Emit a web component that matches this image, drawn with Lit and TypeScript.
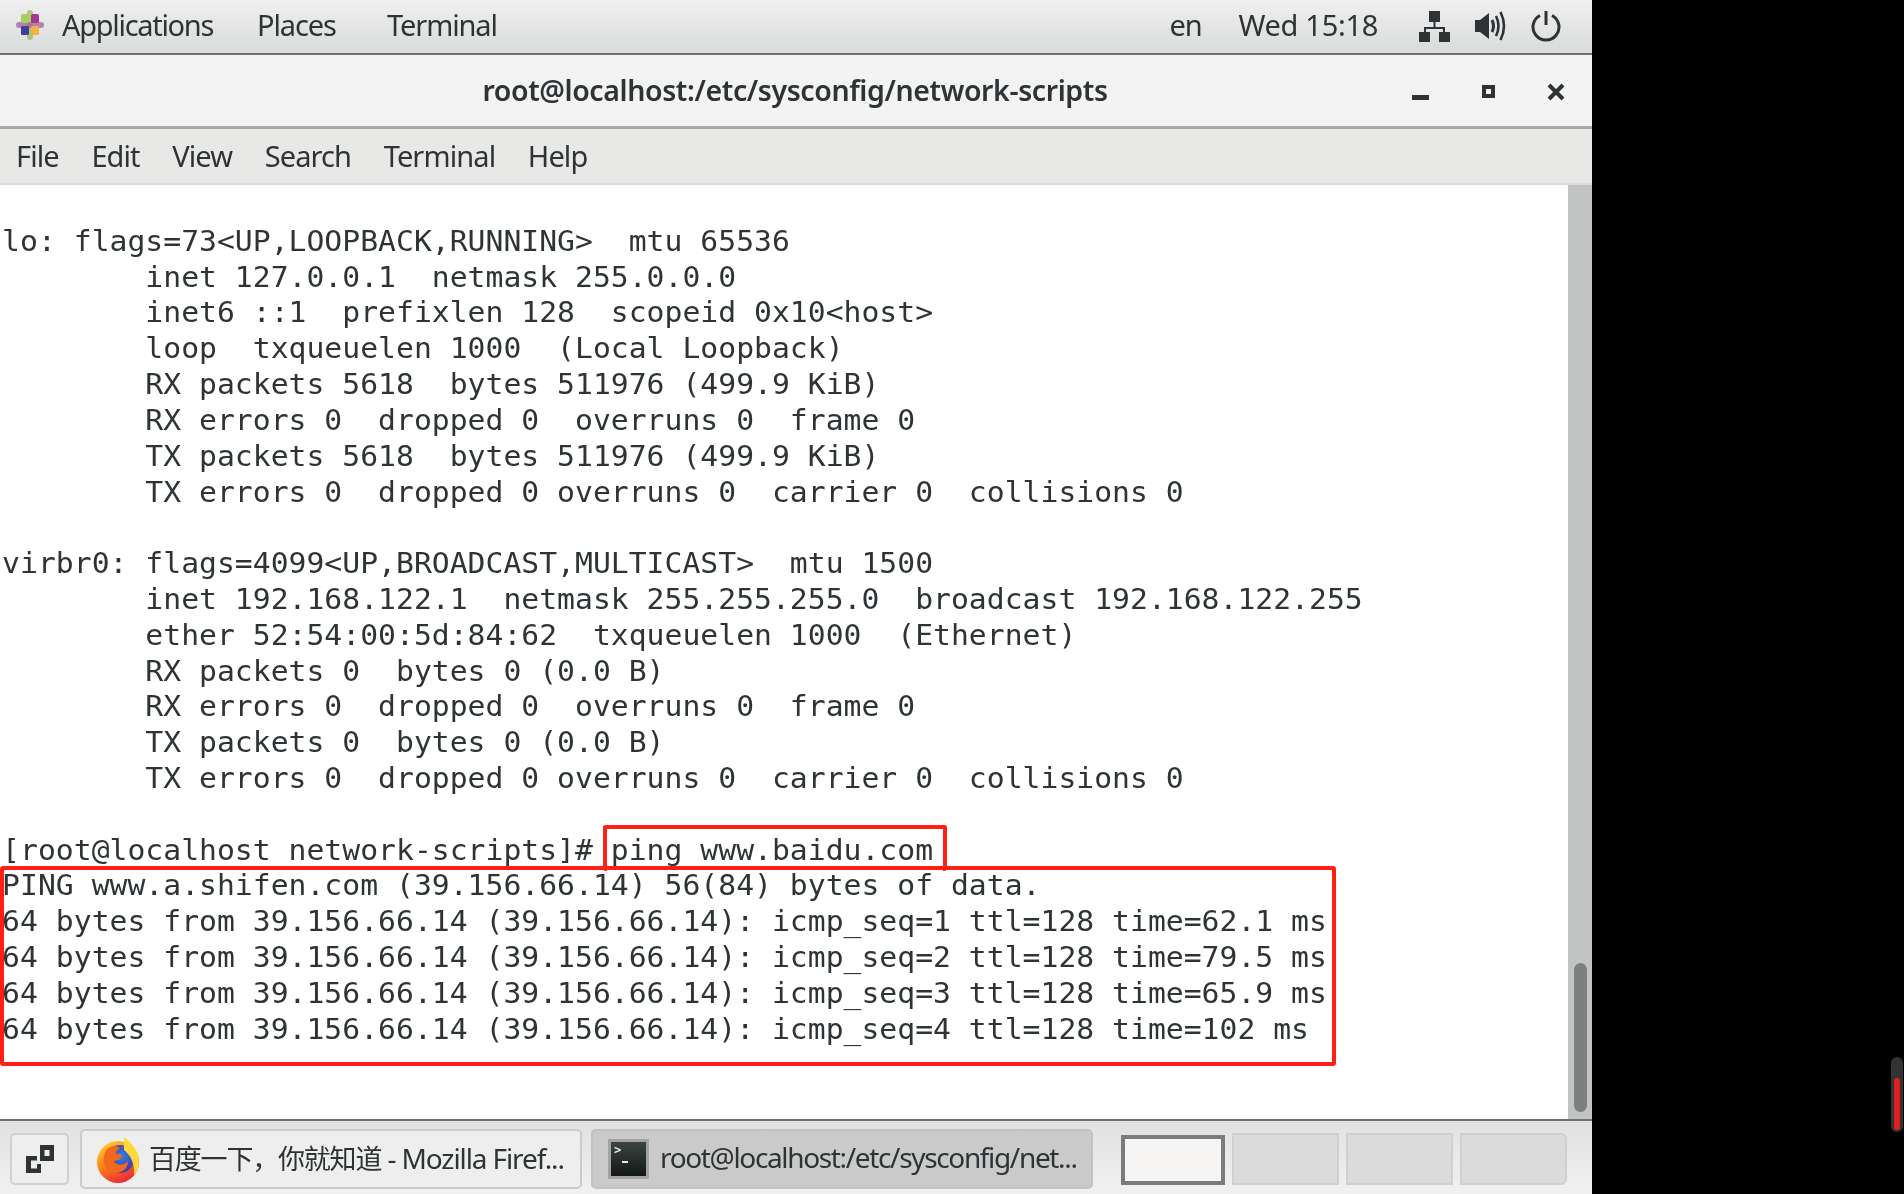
import { LitElement, html, css, svg } from "lit";
import { customElement } from "lit/decorators.js";

const TERM = `
lo: flags=73<UP,LOOPBACK,RUNNING>  mtu 65536
        inet 127.0.0.1  netmask 255.0.0.0
        inet6 ::1  prefixlen 128  scopeid 0x10<host>
        loop  txqueuelen 1000  (Local Loopback)
        RX packets 5618  bytes 511976 (499.9 KiB)
        RX errors 0  dropped 0  overruns 0  frame 0
        TX packets 5618  bytes 511976 (499.9 KiB)
        TX errors 0  dropped 0 overruns 0  carrier 0  collisions 0

virbr0: flags=4099<UP,BROADCAST,MULTICAST>  mtu 1500
        inet 192.168.122.1  netmask 255.255.255.0  broadcast 192.168.122.255
        ether 52:54:00:5d:84:62  txqueuelen 1000  (Ethernet)
        RX packets 0  bytes 0 (0.0 B)
        RX errors 0  dropped 0  overruns 0  frame 0
        TX packets 0  bytes 0 (0.0 B)
        TX errors 0  dropped 0 overruns 0  carrier 0  collisions 0

[root@localhost network-scripts]# ping www.baidu.com
PING www.a.shifen.com (39.156.66.14) 56(84) bytes of data.
64 bytes from 39.156.66.14 (39.156.66.14): icmp_seq=1 ttl=128 time=62.1 ms
64 bytes from 39.156.66.14 (39.156.66.14): icmp_seq=2 ttl=128 time=79.5 ms
64 bytes from 39.156.66.14 (39.156.66.14): icmp_seq=3 ttl=128 time=65.9 ms
64 bytes from 39.156.66.14 (39.156.66.14): icmp_seq=4 ttl=128 time=102 ms`;

const appsIcon = svg`<svg class="apps" viewBox="0 0 28 32" width="28" height="32">
  <rect x="11" y="1" width="6" height="30" rx="3" fill="#9ab84a" opacity=".7"/>
  <rect x="0" y="13" width="28" height="6" rx="3" fill="#a05a9a" opacity=".7"/>
  <rect x="5" y="5" width="8" height="9" rx="1.5" fill="#a3cf5a"/>
  <rect x="15" y="5" width="8" height="9" rx="1.5" fill="#a8378f"/>
  <rect x="5" y="17" width="8" height="9" rx="1.5" fill="#3f3f9f"/>
  <rect x="15" y="17" width="8" height="9" rx="1.5" fill="#f5b043"/>
</svg>`;

const netIcon = svg`<svg viewBox="0 0 31 32" width="31" height="32" fill="#2e3436">
  <rect x="10" y="1" width="11" height="11"/>
  <path d="M14.5 12h2v5H26v6h-2v-4H7v4H5v-6h9.5z"/>
  <rect x="0" y="22" width="11" height="10"/>
  <rect x="20" y="22" width="11" height="10"/>
</svg>`;

const volIcon = svg`<svg viewBox="0 0 31 32" width="31" height="32" fill="none" stroke="#2e3436">
  <path d="M0 10h5l9-7v26l-9-7H0z" fill="#2e3436" stroke="none"/>
  <path d="M17 10q3 6 0 12" stroke-width="3"/>
  <path d="M21 6q5 10 0 20" stroke-width="2.6"/>
  <path d="M25.5 2q7 14 0 28" stroke-width="2.6"/>
</svg>`;

const powerIcon = svg`<svg viewBox="0 0 30 32" width="30" height="32" fill="none" stroke="#2e3436" stroke-width="3">
  <path d="M15 1v14"/>
  <path d="M9 5.5a13 13 0 1 0 12 0"/>
</svg>`;

const winSwitch = svg`<svg viewBox="0 0 28 28" width="28" height="28" fill="#2e3436">
  <path fill-rule="evenodd" d="M14 0h14v16H14zM18.5 5v6h5V5z"/>
  <path d="M0 11h11v4.500H5v8h6V19h4v9H0z"/>
</svg>`;

const firefox = svg`<svg viewBox="0 0 44 47" width="44" height="47">
  <defs>
    <linearGradient id="ff" x1="0.2" y1="0" x2="0.7" y2="1">
      <stop offset="0" stop-color="#ffcf2d"/><stop offset=".5" stop-color="#ff7a1a"/><stop offset="1" stop-color="#e6253a"/>
    </linearGradient>
    <radialGradient id="fb" cx=".55" cy=".4" r=".55">
      <stop offset="0" stop-color="#2f7fe0"/><stop offset="1" stop-color="#4a3aa8"/>
    </radialGradient>
  </defs>
  <circle cx="22" cy="26" r="21" fill="url(#ff)"/>
  <circle cx="24" cy="23" r="14" fill="url(#fb)"/>
  <path d="M28 1c8 6 15 14 15 25 0 6-2 10-5 13 1-9-2-19-10-25z" fill="#ffd93a"/>
  <path d="M11 13c5-4 11-4 13 0-3 0-4 2-4 5 4-1 7 1 5 4-2 3-6 2-7 3 2 5 10 5 14 0 0 9-9 14-17 11C7 33 5 21 11 13z" fill="#f2691e"/>
</svg>`;

const termIcon = html`<div class="ticon"><span class="tp">&gt;</span><span class="tu"></span></div>`;

@customElement("app-root")
export class AppRoot extends LitElement {
  static styles = css`
    :host { display: block; width: 1904px; height: 1194px; background: #000; overflow: hidden; position: relative; }
    * { box-sizing: border-box; }
    .win { width: 1592px; height: 1194px; display: flex; flex-direction: column; color: #2e3436;
      font-family: "Noto Sans", "Noto Sans CJK SC", sans-serif; filter: blur(0.6px); }
    .top { height: 55px; flex: none; display: flex; align-items: center; padding: 0 16px 5px 16px;
      background: linear-gradient(#f0f0f0, #d9dada); border-bottom: 2px solid #6f7272;
      font-size: 29px; letter-spacing: -1.1px; }
    .top .ic { padding-top: 2px; }
    .top .apps { margin-right: 18px; margin-top: 2px; }
    .top .m1 { width: 195px; letter-spacing: -1.3px; }
    .top .m2 { width: 130px; }
    .top .spacer { flex: 1; }
    .top .en { margin-right: 37px; }
    .top .clock { margin-right: 41px; letter-spacing: -0.3px; }
    .top .ic { display: flex; gap: 25px; margin-right: 15px; margin-top: 2px; }
    .title { height: 74px; flex: none; display: flex; align-items: center; justify-content: center; position: relative;
      background: #f3f3f3; border-bottom: 3px solid #a9a9a3; font-size: 28.5px; font-weight: 600; letter-spacing: -0.4px; padding-bottom: 1px; padding-right: 2px; }
    .ctl { position: absolute; background: #2e3436; }
    .min { left: 1412px; top: 40px; width: 17px; height: 5px; }
    .max { left: 1482px; top: 30px; width: 13px; height: 13px; background: none; border: 4px solid #2e3436; }
    .close { left: 1546px; top: 28px; width: 20px; height: 18px; background: none; }
    .menu { height: 56px; flex: none; display: flex; align-items: center; gap: 32.6px; padding: 0 0 1px 16px;
      background: #e8e8e7; border-bottom: 2px solid #dcdcda; font-size: 29px; letter-spacing: -0.9px; }
    .body { flex: 1; min-height: 0; display: flex; background: #fff; }
    .term { flex: 1; overflow: hidden; padding-top: 3px; }
    pre { margin: 0; font-family: "DejaVu Sans Mono", monospace; font-size: 28px; line-height: 35.82px;
      transform: scaleX(1.062); transform-origin: 0 0; padding-left: 2px; color: #2e3436; }
    .sb { width: 24px; flex: none; background: #c2c4c3; position: relative; }
    .thumb { position: absolute; left: 6px; width: 13px; top: 778px; height: 149px; border-radius: 7px; background: #7d8080; }
    .task { height: 75px; flex: none; position: relative; display: flex; align-items: flex-start; padding: 8px 0 0 10px;
      background: linear-gradient(#e1e1e1, #f1f1f1); border-top: 2px solid #6f7272; font-size: 28px; letter-spacing: -1.1px; }
    .sw { width: 59px; height: 52px; margin: 4px 11px 0 0; border: 2px solid #d0d0d0; border-radius: 5px; background: #eee;
      display: flex; align-items: center; justify-content: center; flex: none; }
    .tb { width: 502px; height: 60px; flex: none; border-radius: 5px; display: flex; align-items: center; white-space: pre; overflow: hidden; }
    .tb > span { margin-top: -4px; }
    .tb.ffx { background: #eee; border: 2px solid #cbcbcb; margin-right: 9px; padding-left: 14px; }
    .tb.ffx svg { margin-right: 9px; flex: none; }
    .tb.act { background: #cacaca; border: 2px solid #c2c2c2; padding-left: 15px; letter-spacing: -1.35px; }
    .cjk { font-size: 27px; letter-spacing: -1.2px; }
    .ws { display: flex; gap: 7px; margin-left: 28px; align-items: flex-start; }
    .w { width: 107px; height: 52px; margin-top: 4px; background: #dbdbdb; border: 2px solid #d0d0d0; }
    .w.on { width: 104px; height: 50px; margin-top: 6px; background: #f6f5f3; border: 4px solid #7b7b7b; }
    .w.last { border-radius: 0 6px 6px 0; }
    .ticon { width: 41px; height: 40px; margin-right: 11px; flex: none; position: relative; border: 3px solid #a3a3a3; background: linear-gradient(#3b4442, #141816); }
    .tp { position: absolute; left: 3px; top: 1px; color: #e8ecea; font: 700 12px "DejaVu Sans Mono", monospace; letter-spacing: 0; }
    .tu { position: absolute; left: 11px; top: 19px; width: 6px; height: 2px; background: #e8ecea; }
    .red { position: absolute; border: 4px solid #ff2013; border-radius: 3px; pointer-events: none; }
    .r1 { left: 603px; top: 825px; width: 344px; height: 46px; border-bottom: none; }
    .r2 { left: 0; top: 866px; width: 1336px; height: 200px; }
    .edge { position: absolute; left: 1891px; top: 1057px; width: 12px; height: 75px; background: #333; border-radius: 6px; }
    .edge i { position: absolute; left: 3px; width: 6px; top: 21px; height: 52px; background: #e02020; border-radius: 3px; display: block; }
  `;

  render() {
    return html`
      <div class="win">
        <div class="top">
          ${appsIcon}
          <span class="m1">Applications</span><span class="m2">Places</span><span>Terminal</span>
          <span class="spacer"></span>
          <span class="en">en</span><span class="clock">Wed 15:18</span>
          <span class="ic">${netIcon}${volIcon}${powerIcon}</span>
        </div>
        <div class="title">
          root@localhost:/etc/sysconfig/network-scripts
          <div class="ctl min"></div>
          <div class="ctl max"></div>
          <svg class="ctl close" viewBox="0 0 20 18" fill="none" stroke="#2e3436" stroke-width="4"><path d="M3 2l14 14M17 2L3 16"/></svg>
        </div>
        <div class="menu"><span>File</span><span>Edit</span><span>View</span><span>Search</span><span>Terminal</span><span>Help</span></div>
        <div class="body">
          <div class="term"><pre>${TERM}</pre></div>
          <div class="sb"><div class="thumb"></div></div>
        </div>
        <div class="task">
          <div class="sw">${winSwitch}</div>
          <div class="tb ffx">${firefox}<span><span class="cjk">百度一下，你就知道</span> - Mozilla Firef...</span></div>
          <div class="tb act">${termIcon}<span>root@localhost:/etc/sysconfig/net...</span></div>
          <div class="ws"><div class="w on"></div><div class="w"></div><div class="w"></div><div class="w last"></div></div>
        </div>
      </div>
      <div class="red r1"></div>
      <div class="red r2"></div>
      <div class="edge"><i></i></div>
    `;
  }
}
